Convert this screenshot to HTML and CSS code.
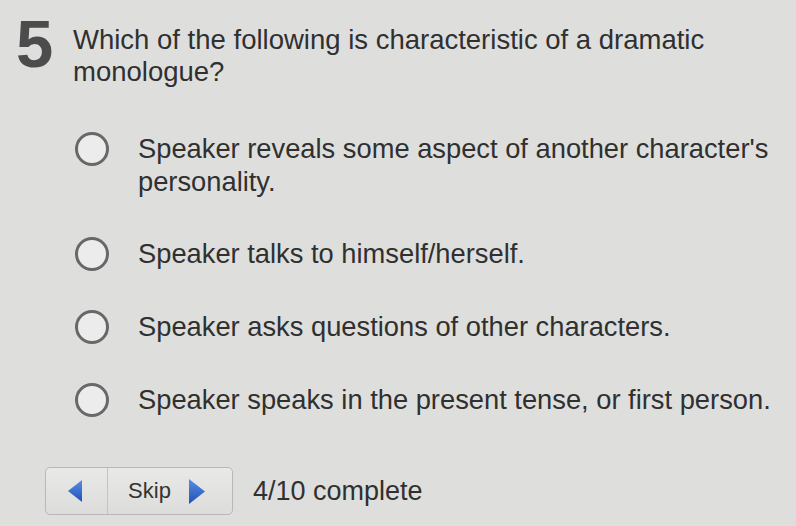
FILE: index.html
```html
<!DOCTYPE html>
<html>
<head>
<meta charset="utf-8">
<link rel="stylesheet" href="styles.css">
</head>
<body>
<div class="page">
  <div class="question">
    <div class="qnum">5</div>
    <div class="qtext">Which of the following is characteristic of a dramatic monologue?</div>
  </div>
  <ul class="options">
    <li class="option"><span class="radio"></span><span class="otext">Speaker reveals some aspect of another character's personality.</span></li>
    <li class="option"><span class="radio"></span><span class="otext">Speaker talks to himself/herself.</span></li>
    <li class="option"><span class="radio"></span><span class="otext">Speaker asks questions of other characters.</span></li>
    <li class="option"><span class="radio"></span><span class="otext">Speaker speaks in the present tense, or first person.</span></li>
  </ul>
  <div class="footer">
    <div class="btngroup">
      <div class="btn prev">
        <svg width="16" height="22" viewBox="0 0 16 22"><defs><linearGradient id="g1" x1="0" y1="0" x2="0" y2="1"><stop offset="0" stop-color="#5b8de0"/><stop offset="1" stop-color="#1f52b8"/></linearGradient></defs><path d="M15 0 L1 11 L15 22 Z" fill="url(#g1)"/></svg>
      </div>
      <div class="btn skip">
        <span class="skiplabel">Skip</span>
        <svg width="18" height="25" viewBox="0 0 18 25"><defs><linearGradient id="g2" x1="0" y1="0" x2="0" y2="1"><stop offset="0" stop-color="#5b8de0"/><stop offset="1" stop-color="#1f52b8"/></linearGradient></defs><path d="M1 0 L17 12.5 L1 25 Z" fill="url(#g2)"/></svg>
      </div>
    </div>
    <div class="progress">4/10 complete</div>
  </div>
</div>
</body>
</html>
```

FILE: styles.css
```css
html, body {
  margin: 0;
  padding: 0;
}
body {
  background: #dedfdd;
  font-family: "Liberation Sans", Arial, sans-serif;
  color: #303030;
  width: 796px;
  height: 526px;
  overflow: hidden;
}
.page {
  padding: 24px 0 0 0;
}
.question {
  display: flex;
  align-items: flex-start;
}
.qnum {
  font-weight: bold;
  font-size: 67px;
  line-height: 67px;
  color: #4c4c4c;
  margin-left: 16px;
  margin-top: -14px;
  width: 57px;
}
.qtext {
  font-size: 27.5px;
  line-height: 32px;
  width: 680px;
}
.options {
  list-style: none;
  margin: 44px 0 0 0;
  padding: 0;
  display: flex;
  flex-direction: column;
  gap: 39px;
}
.option {
  display: flex;
  align-items: flex-start;
}
.radio {
  flex: none;
  width: 28px;
  height: 28px;
  border: 3px solid #686868;
  border-radius: 50%;
  background: #ececec;
  margin: 0 0 0 75px;
}
.otext {
  font-size: 27.3px;
  line-height: 33px;
  margin-left: 29px;
  width: 650px;
}
.footer {
  display: flex;
  align-items: center;
  margin-top: 50px;
  margin-left: 45px;
}
.btngroup {
  display: flex;
  width: 186px;
  height: 46px;
  border: 1px solid #b8b8b8;
  border-radius: 5px;
  background: linear-gradient(#e9e9e8, #dcdcdb);
  overflow: hidden;
}
.btn {
  display: flex;
  align-items: center;
  justify-content: center;
}
.prev {
  width: 62px;
  border-right: 1px solid #c4c4c4;
  padding-right: 4px;
  box-sizing: border-box;
}
.skip {
  flex: 1;
  gap: 17px;
  padding-right: 6px;
}
.skiplabel {
  font-size: 22px;
  color: #333;
}
.progress {
  font-size: 27px;
  margin-left: 20px;
  color: #303030;
}
```
